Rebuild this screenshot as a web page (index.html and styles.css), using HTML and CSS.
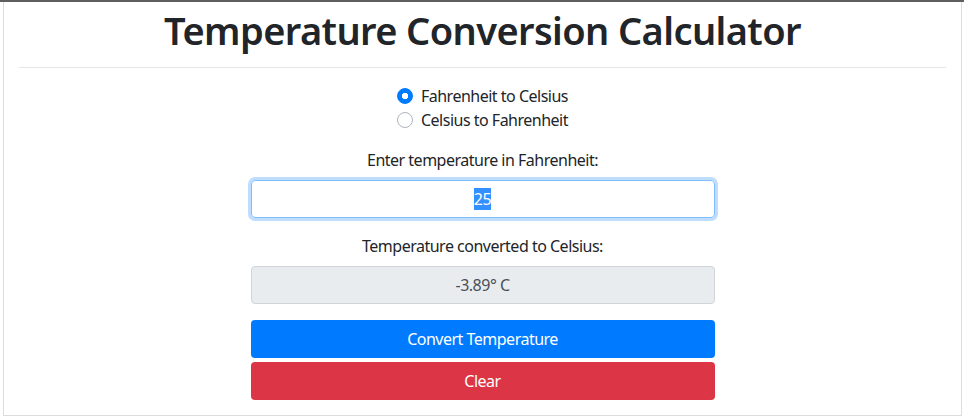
FILE: index.html
```html
<!DOCTYPE html>
<html lang="en">
<head>
<meta charset="utf-8">
<title>Temperature Conversion Calculator</title>
<link rel="stylesheet" href="styles.css">
</head>
<body>
<div class="topbar"></div>
<div class="frame">
  <h1 class="title">Temperature Conversion Calculator</h1>
  <hr class="divider">
  <div class="calc">
    <div class="radios">
      <label class="radio"><span class="dot checked"></span>Fahrenheit to Celsius</label>
      <label class="radio"><span class="dot"></span>Celsius to Fahrenheit</label>
    </div>
    <div class="group">
      <div class="label">Enter temperature in Fahrenheit:</div>
      <div class="field focused"><span class="sel">25</span></div>
    </div>
    <div class="group">
      <div class="label">Temperature converted to Celsius:</div>
      <div class="field readonly">-3.89° C</div>
    </div>
    <button class="btn primary">Convert Temperature</button>
    <button class="btn danger">Clear</button>
  </div>
</div>
</body>
</html>
```
FILE: styles.css
```css
* { box-sizing: border-box; }
html, body { margin: 0; padding: 0; background: #fff; }
body {
  font-family: "Noto Sans", "Open Sans", sans-serif;
  font-size: 16px;
  line-height: 1.5;
  letter-spacing: -0.5px;
  color: #212529;
  width: 964px;
  height: 419px;
  overflow: hidden;
}
.topbar { height: 2px; background: #5f5f5f; }
.frame {
  margin: 0 2px 0 3px;
  border: 1px solid #dcdcdc;
  border-top: none;
  height: 414px;
  padding: 4px 15px 0;
}
.title {
  margin: 0;
  text-align: center;
  font-size: 38px;
  line-height: 48px;
  font-weight: 600;
  letter-spacing: -0.6px;
}
.divider {
  margin: 13px 0 16px;
  border: 0;
  border-top: 1px solid #e5e5e5;
}
.calc {
  width: 464px;
  margin: 0 auto;
  display: flex;
  flex-direction: column;
  align-items: stretch;
  text-align: center;
}
.radios {
  align-self: center;
  display: flex;
  flex-direction: column;
  align-items: flex-start;
  margin-bottom: 16px;
}
.radio {
  display: flex;
  align-items: center;
  gap: 8px;
  height: 24px;
}
.dot {
  width: 16px;
  height: 16px;
  border-radius: 50%;
  border: 1px solid #adb5bd;
  background: #fff;
}
.dot.checked {
  border-color: #007bff;
  background: radial-gradient(circle, #fff 0 3px, #007bff 3.5px);
}
.group { margin-bottom: 16px; }
.label { margin-bottom: 8px; }
.field {
  height: 38px;
  border: 1px solid #ced4da;
  border-radius: 4px;
  padding: 6px 12px;
  color: #495057;
  text-align: center;
}
.field.focused {
  border-color: #80bdff;
  box-shadow: 0 0 0 3px rgba(0, 123, 255, 0.25);
}
.sel { background: #3390ff; color: #fff; }
.field.readonly { background: #e9ecef; }
.btn {
  font: inherit;
  letter-spacing: inherit;
  height: 38px;
  border: 1px solid transparent;
  border-radius: 4px;
  color: #fff;
  cursor: pointer;
}
.btn.primary { background: #007bff; margin-bottom: 4px; }
.btn.danger { background: #dc3545; }
```
